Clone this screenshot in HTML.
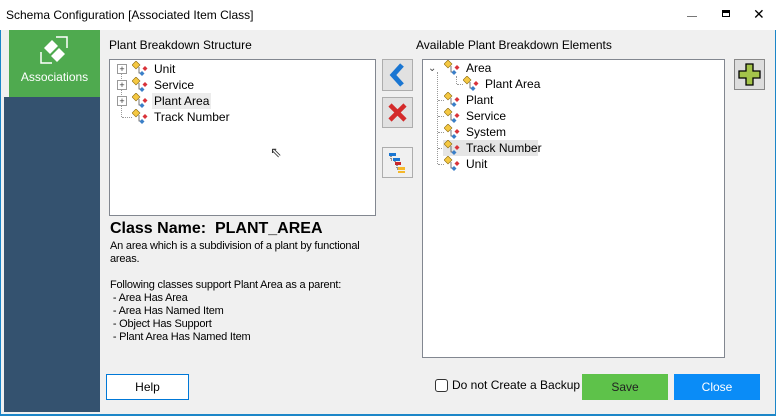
<!DOCTYPE html>
<html><head><style>
body{margin:0;width:776px;height:416px;overflow:hidden;background:#f0f0f0;font-family:"Liberation Sans",sans-serif;font-size:12px;color:#000;position:relative}
.a{position:absolute}
.box{position:absolute;background:#fff;border:1px solid #828790}
.row{position:absolute;height:16px;line-height:16px;font-size:12px}
.ic{position:absolute;width:16px;height:16px}
.btn{position:absolute;border:1px solid #adadad;background:#e1e1e1;box-sizing:border-box}
.d{font-size:11px;line-height:13px;letter-spacing:-0.2px}
</style></head><body>
<div class="a" style="left:0;top:0;width:776px;height:30px;background:#fff"></div>
<div class="a" style="left:6px;top:8px;font-size:12px">Schema Configuration [Associated Item Class]</div>
<div class="a" style="left:687px;top:16px;width:10px;height:1px;background:#777"></div>
<div class="a" style="left:722px;top:10px;width:8px;height:7px;border:1px solid #000;border-top-width:3px;box-sizing:border-box"></div>
<div class="a" style="left:753px;top:6px;font-size:14px">✕</div>
<div class="a" style="left:0;top:30px;width:1px;height:386px;background:#1c86c8"></div>
<div class="a" style="right:0;top:30px;width:1px;height:386px;background:#1c86c8"></div>
<div class="a" style="left:0;top:414px;width:776px;height:2px;background:#1c86c8"></div>
<div class="a" style="left:9px;top:30px;width:91px;height:67px;background:#4faa4f"></div>
<div class="a" style="left:4px;top:97px;width:96px;height:315px;background:#34526f"></div>
<svg class="a" style="left:38px;top:34px" width="32" height="32" viewBox="0 0 32 32">
<path d="M6 14 L14 6 L20 12 L12 20Z" fill="#fff"/><path d="M13 26 L21 18 L27 24 L19 32Z" transform="translate(0,-4)" fill="#fff"/>
<path d="M18 3 H29 V14" fill="none" stroke="#fff" stroke-width="1.5"/><path d="M3 18 V29 H14" fill="none" stroke="#fff" stroke-width="1.5"/></svg>
<div class="a" style="left:9px;top:70px;width:91px;text-align:center;color:#fff;font-size:12px">Associations</div>

<div class="a" style="left:109px;top:38px">Plant Breakdown Structure</div>
<div class="a" style="left:416px;top:38px">Available Plant Breakdown Elements</div>

<svg width="0" height="0" style="position:absolute"><defs><g id="i">
<path d="M7 6 V12 H10" fill="none" stroke="#555" stroke-width="0.8"/>
<path d="M4 0 L8 4 L4 8 L0 4Z" fill="#f5c842" stroke="#8a6a10" stroke-width="0.6"/>
<path d="M13 5 L15.5 7.5 L13 10 L10.5 7.5Z" fill="#d9333a"/>
<path d="M10 10 L12.5 12.5 L10 15 L7.5 12.5Z" fill="#3a7fc8"/></g></defs></svg>

<div class="box" style="left:109px;top:59px;width:265px;height:155px"></div>
<div class="a" style="left:121px;top:68px;width:1px;height:49px;border-left:1px dotted #999"></div>
<div class="a" style="left:122px;top:117px;width:10px;border-top:1px dotted #999"></div>
<div class="a" style="left:117px;top:64px;width:8px;height:8px;border:1px solid #999;background:#fff;font-size:9px;line-height:8px;text-align:center;color:#333">+</div>
<div class="a" style="left:117px;top:80px;width:8px;height:8px;border:1px solid #999;background:#fff;font-size:9px;line-height:8px;text-align:center;color:#333">+</div>
<div class="a" style="left:117px;top:96px;width:8px;height:8px;border:1px solid #999;background:#fff;font-size:9px;line-height:8px;text-align:center;color:#333">+</div>
<svg class="ic" style="left:132px;top:61px"><use href="#i"/></svg><div class="row" style="left:154px;top:61px">Unit</div>
<svg class="ic" style="left:132px;top:77px"><use href="#i"/></svg><div class="row" style="left:154px;top:77px">Service</div>
<svg class="ic" style="left:132px;top:93px"><use href="#i"/></svg><div class="row" style="left:152px;top:93px;background:#ececec;padding:0 2px">Plant Area</div>
<svg class="ic" style="left:132px;top:109px"><use href="#i"/></svg><div class="row" style="left:154px;top:109px">Track Number</div>
<div class="a" style="left:270px;top:144px;font-size:14px;color:#333">⇖</div>

<div class="a" style="left:110px;top:220px;font-size:16px;font-weight:bold">Class Name:&nbsp; PLANT_AREA</div>
<div class="a d" style="left:110px;top:240px;width:265px">An area which is a subdivision of a plant by functional areas.<br><br>Following classes support Plant Area as a parent:<br>&nbsp;- Area Has Area<br>&nbsp;- Area Has Named Item<br>&nbsp;- Object Has Support<br>&nbsp;- Plant Area Has Named Item</div>

<div class="a" style="left:106px;top:374px;width:81px;height:24px;border:1px solid #0078d7;background:#fff;text-align:center;line-height:24px">Help</div>

<div class="btn" style="left:382px;top:59px;width:31px;height:32px"><svg width="29" height="30"><path d="M19 5 L10 15 L19 25" fill="none" stroke="#1a76d2" stroke-width="5"/></svg></div>
<div class="btn" style="left:382px;top:97px;width:31px;height:31px"><svg width="29" height="29"><path d="M7 7 L22 22 M22 7 L7 22" stroke="#d42a2a" stroke-width="4.5"/></svg></div>
<div class="btn" style="left:382px;top:147px;width:31px;height:31px;background:#f0f0f0"><svg width="29" height="29"><rect x="6" y="5" width="7" height="3" fill="#1a76d2"/><rect x="10" y="10" width="7" height="3" fill="#1a76d2"/><rect x="12" y="14" width="6" height="3" fill="#c8262b"/><rect x="15" y="19" width="7" height="3" fill="#f5b82a"/><rect x="15" y="23" width="7" height="2" fill="#f5b82a"/><path d="M8 8 V12 H10 M12 13 V15 M14 17 V21 H15" fill="none" stroke="#000" stroke-width="0.8" stroke-dasharray="1 1"/></svg></div>

<div class="box" style="left:422px;top:59px;width:301px;height:297px"></div>
<div class="a" style="left:428px;top:63px;font-size:10px;color:#444">⌄</div>
<div class="a" style="left:437px;top:72px;width:1px;height:92px;border-left:1px dotted #999"></div>
<div class="a" style="left:456px;top:76px;width:1px;height:8px;border-left:1px dotted #999"></div>
<div class="a" style="left:457px;top:84px;width:6px;border-top:1px dotted #999"></div>
<div class="a" style="left:438px;top:100px;width:6px;border-top:1px dotted #999"></div>
<div class="a" style="left:438px;top:116px;width:6px;border-top:1px dotted #999"></div>
<div class="a" style="left:438px;top:132px;width:6px;border-top:1px dotted #999"></div>
<div class="a" style="left:438px;top:148px;width:6px;border-top:1px dotted #999"></div>
<div class="a" style="left:438px;top:164px;width:6px;border-top:1px dotted #999"></div>
<svg class="ic" style="left:444px;top:60px"><use href="#i"/></svg><div class="row" style="left:466px;top:60px">Area</div>
<svg class="ic" style="left:463px;top:76px"><use href="#i"/></svg><div class="row" style="left:485px;top:76px">Plant Area</div>
<svg class="ic" style="left:444px;top:92px"><use href="#i"/></svg><div class="row" style="left:466px;top:92px">Plant</div>
<svg class="ic" style="left:444px;top:108px"><use href="#i"/></svg><div class="row" style="left:466px;top:108px">Service</div>
<svg class="ic" style="left:444px;top:124px"><use href="#i"/></svg><div class="row" style="left:466px;top:124px">System</div>
<div class="a" style="left:443px;top:140px;width:95px;height:16px;background:#e5e5e5"></div>
<svg class="ic" style="left:444px;top:140px"><use href="#i"/></svg><div class="row" style="left:466px;top:140px">Track Number</div>
<svg class="ic" style="left:444px;top:156px"><use href="#i"/></svg><div class="row" style="left:466px;top:156px">Unit</div>

<div class="btn" style="left:734px;top:59px;width:31px;height:31px;background:#ddd;border-color:#888"><svg width="29" height="29"><path d="M11 4 H18 V11 H25 V18 H18 V25 H11 V18 H4 V11 H11Z" fill="#a4c44a" stroke="#000" stroke-width="1.3"/></svg></div>

<div class="a" style="left:435px;top:379px;width:11px;height:11px;border:1px solid #333;border-radius:3px;background:#fff"></div>
<div class="a" style="left:452px;top:378px">Do not Create a Backup</div>
<div class="a" style="left:582px;top:374px;width:86px;height:26px;background:#5ec24a;text-align:center;line-height:26px;color:#222">Save</div>
<div class="a" style="left:674px;top:374px;width:86px;height:26px;background:#0a8cf7;text-align:center;line-height:26px;color:#fff">Close</div>
</body></html>
